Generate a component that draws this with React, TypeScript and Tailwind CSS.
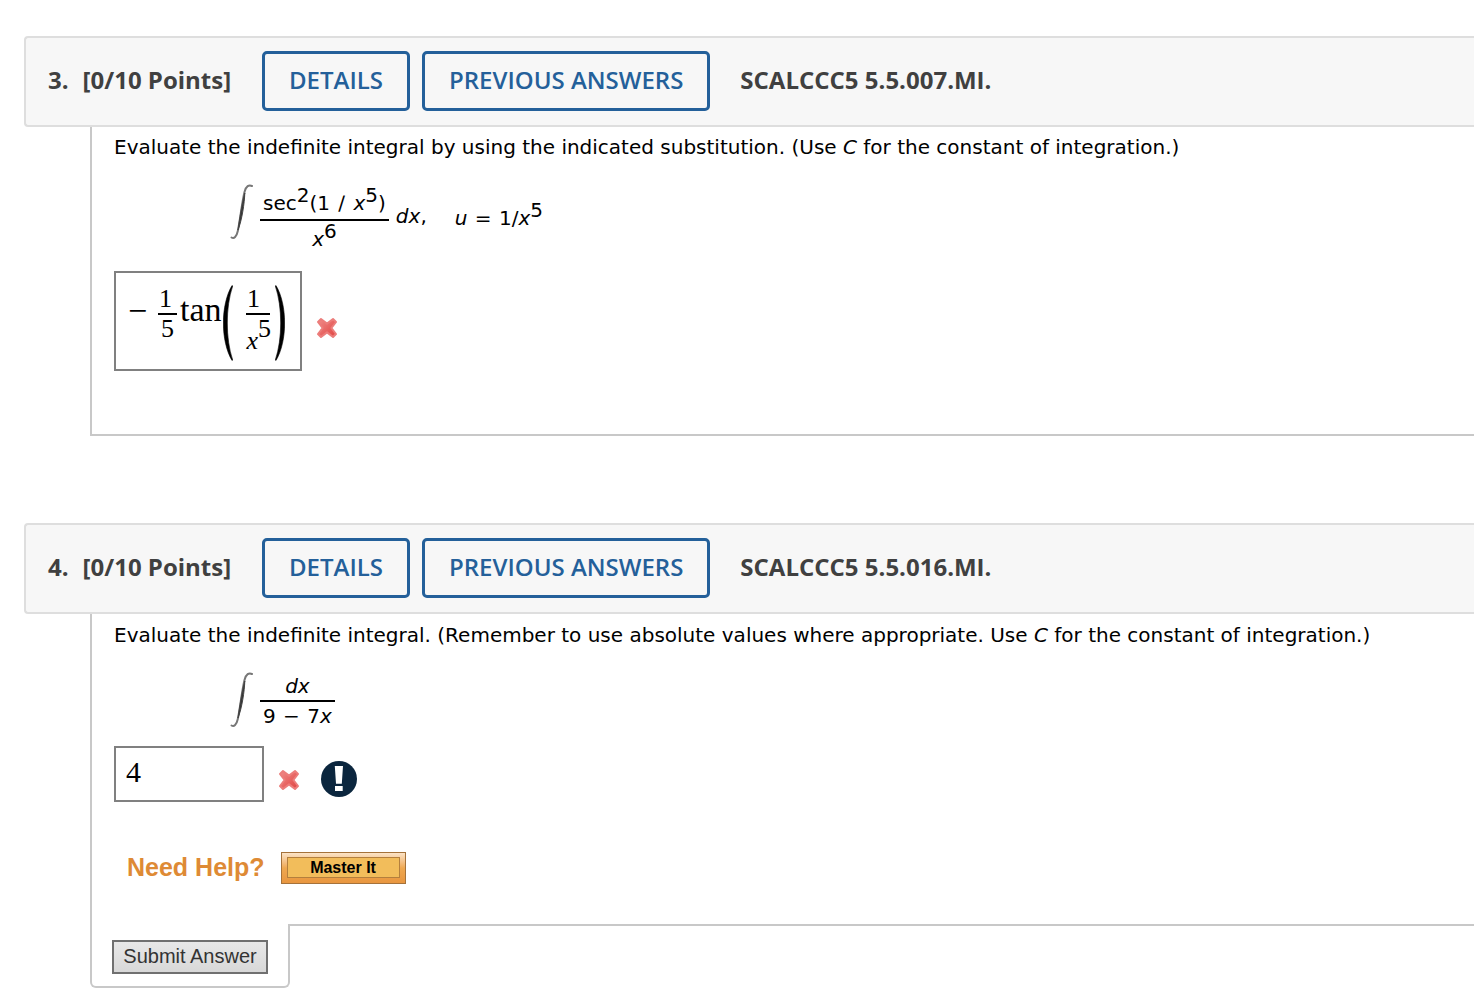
import type { ReactNode } from 'react';

function Cross() {
  return (
    <svg viewBox="0 0 22 22" className="h-[22px] w-[22px] shrink-0" role="img" aria-label="Incorrect">
      <defs>
        <linearGradient id="cross" x1="0" y1="0" x2="1" y2="1">
          <stop offset="0" stopColor="#f08c8a" />
          <stop offset="1" stopColor="#e04340" />
        </linearGradient>
      </defs>
      <path
        d="M5 2 L11 6.6 L17 2 L20 5 L15.4 11 L20 17 L17 20 L11 15.4 L5 20 L2 17 L6.6 11 L2 5 Z"
        fill="url(#cross)"
        stroke="#ec7d7b"
        strokeWidth="2"
        strokeLinejoin="round"
      />
    </svg>
  );
}

function Alert() {
  return (
    <svg viewBox="0 0 36 36" className="h-9 w-9" aria-hidden="true">
      <circle cx="18" cy="18" r="18" fill="#0b263e" />
      <path d="M13.8 5 H22 L20.8 22.7 H15 Z M14 25 H21.7 V30 H14 Z" fill="#fff" />
    </svg>
  );
}

function Integral() {
  return (
    <svg viewBox="0 0 24 58" className="h-[58px] w-6 shrink-0" aria-label="integral" role="img">
      <path
        d="M1.500 54.500 C4 56 6.500 54 7.800 48 C10 38 12 19 14.500 9 C16 3 19 1.500 22 3"
        fill="none"
        stroke="#777"
        strokeWidth="2"
        strokeLinecap="round"
      />
      <path d="M8 47 C9.500 37 12 20 14.800 10 C14.500 20 12 37 8 47 Z" fill="#333" stroke="#444" strokeWidth="1" />
    </svg>
  );
}

function Paren({ flip = false }: { flip?: boolean }) {
  return (
    <svg viewBox="0 0 10 76" className="h-[76px] w-[10px] shrink-0" aria-hidden="true">
      <path
        d={
          flip
            ? 'M1 0.500 C12.500 20 12.500 56 1 75.500 L0.300 75 C7.500 54 7.500 22 0.300 1 Z'
            : 'M9 0.500 C-2.500 20 -2.500 56 9 75.500 L9.700 75 C2.500 54 2.500 22 9.700 1 Z'
        }
        fill="#000"
        stroke="#000"
        strokeWidth="0.6"
      />
    </svg>
  );
}

function Sup({ children }: { children: ReactNode }) {
  return <sup className="top-0 align-[8px] text-[20px] leading-none">{children}</sup>;
}

function Header({ number, code }: { number: number; code: string }) {
  const button =
    'h-[60px] shrink-0 rounded-[5px] border-3 border-[#24609a] px-6 pb-[2px] text-[24px] font-semibold whitespace-nowrap text-[#24609a]';
  return (
    <header className="flex h-[91px] items-center rounded-l-[4px] border-2 border-r-0 border-[#dedede] bg-[#f7f7f7] pb-px pl-[22px] font-['Open_Sans',sans-serif] text-[24px] font-bold whitespace-nowrap text-[#404040]">
      <h2 className="flex w-[214px] shrink-0 gap-[14px] pb-[2px]">
        <span>{number}.</span>
        <span>[0/10 Points]</span>
      </h2>
      <div className="flex gap-3">
        <button type="button" className={button}>DETAILS</button>
        <button type="button" className={button}>PREVIOUS ANSWERS</button>
      </div>
      <span className="ml-[30px] pb-[2px]">{code}</span>
    </header>
  );
}

export default function App() {
  return (
    <main className="overflow-hidden bg-white pt-9 pb-[18px] pl-6 font-[Verdana,'DejaVu_Sans',sans-serif] text-[20px] text-black">
      <section>
        <Header number={3} code="SCALCCC5 5.5.007.MI." />
        <div className="ml-[66px] border-b-2 border-l-2 border-[#c8c8c8] pt-2 pb-[63px] pl-[22px]">
          <p className="leading-6 whitespace-nowrap">
            Evaluate the indefinite integral by using the indicated substitution. (Use <i>C</i> for the constant of integration.)
          </p>
          <div className="mt-6 ml-[116px] flex h-[72px] items-start">
            <Integral />
            <div className="ml-[6px] flex flex-col text-center whitespace-nowrap">
              <span className="h-9 px-[3px] leading-10">
                sec<Sup>2</Sup>(1 <span className="mx-[2px]">∕</span> <i>x</i><Sup>5</Sup>)
              </span>
              <span className="h-9 border-t-2 border-black leading-9"><i>x</i><Sup>6</Sup></span>
            </div>
            <span className="mt-[17px] ml-[7px] leading-8"><i>dx</i>,</span>
            <span className="mt-[17px] ml-7 leading-8 whitespace-nowrap">
              <i>u</i> <span className="mx-px">=</span> 1/<i>x</i><Sup>5</Sup>
            </span>
          </div>
          <div className="mt-4 flex items-center gap-[14px]">
            <div
              role="textbox"
              tabIndex={0}
              aria-label="Answer to question 3"
              className="flex h-[100px] w-[188px] items-start border-2 border-[#808080] pt-3 pl-3 font-['Liberation_Serif',serif] text-[34px] leading-none"
            >
              <span className="mt-[9px] w-[30px]">−</span>
              <span className="flex w-[19px] shrink-0 flex-col text-center text-[26px] leading-7">
                <span className="pr-1">1</span>
                <span className="border-t-2 border-black">5</span>
              </span>
              <span className="mt-[8px] mr-px ml-[3px]">tan</span>
              <Paren />
              <span className="mr-[5px] ml-[13px] flex w-6 shrink-0 flex-col text-center text-[26px] leading-7">
                <span className="pr-2">1</span>
                <span className="flex border-t-2 border-black">
                  <i className="mt-3 ml-px">x</i><span>5</span>
                </span>
              </span>
              <Paren flip />
            </div>
            <div className="mt-[14px] flex"><Cross /></div>
          </div>
        </div>
      </section>

      <section className="mt-[87px]">
        <Header number={4} code="SCALCCC5 5.5.016.MI." />
        <div className="ml-[66px] border-l-2 border-[#c8c8c8] pt-[9px] pb-10 pl-[22px]">
          <p className="leading-6 whitespace-nowrap">
            Evaluate the indefinite integral. (Remember to use absolute values where appropriate. Use <i>C</i> for the constant of integration.)
          </p>
          <div className="mt-6 ml-[116px] flex h-16 items-start">
            <Integral />
            <div className="ml-[6px] flex flex-col pt-px text-center leading-7 whitespace-nowrap">
              <i>dx</i>
              <span className="border-t-2 border-black px-[3px]">9 <span className="mx-px">−</span> 7<i>x</i></span>
            </div>
          </div>
          <div className="mt-[11px] flex items-center">
            <input
              aria-label="Answer to question 4"
              defaultValue="4"
              className="h-14 w-[150px] border-2 border-[#808080] px-[10px] pb-1 font-['Liberation_Serif',serif] text-[30px] leading-none"
            />
            <div className="mt-3 ml-[14px] flex"><Cross /></div>
            <button type="button" aria-label="Show notice" className="mt-[10px] ml-[21px]"><Alert /></button>
          </div>
          <div className="mt-[50px] ml-[13px] flex items-center gap-4 font-['Liberation_Sans',sans-serif] font-bold">
            <span className="pb-[2px] text-[25px] leading-[30px] text-[#de8a35]">Need Help?</span>
            <button type="button" className="flex h-8 w-[125px] border border-[#a5723a] bg-linear-to-b from-[#fbe3c6] via-[#efa850] to-[#e8963f] p-[5px] pt-1">
              <span className="flex flex-1 items-center justify-center self-stretch border border-[#b47f3d] bg-[#f2bd5b] text-[16px] leading-none">Master It</span>
            </button>
          </div>
        </div>
        <div className="ml-[66px] flex">
          <div className="w-[200px] rounded-b-[6px] border-2 border-t-0 border-[#c8c8c8] px-5 pt-4 pb-3">
            <button type="submit" className="h-[34px] w-[156px] border-2 border-[#707070] bg-linear-to-b from-[#e8e8e8] to-[#d8d8d8] pb-[2px] font-['Liberation_Sans',sans-serif] text-[20px] leading-none whitespace-nowrap text-[#333]">
              Submit Answer
            </button>
          </div>
          <div className="flex-1 border-t-2 border-[#c8c8c8]" />
        </div>
      </section>
    </main>
  );
}
